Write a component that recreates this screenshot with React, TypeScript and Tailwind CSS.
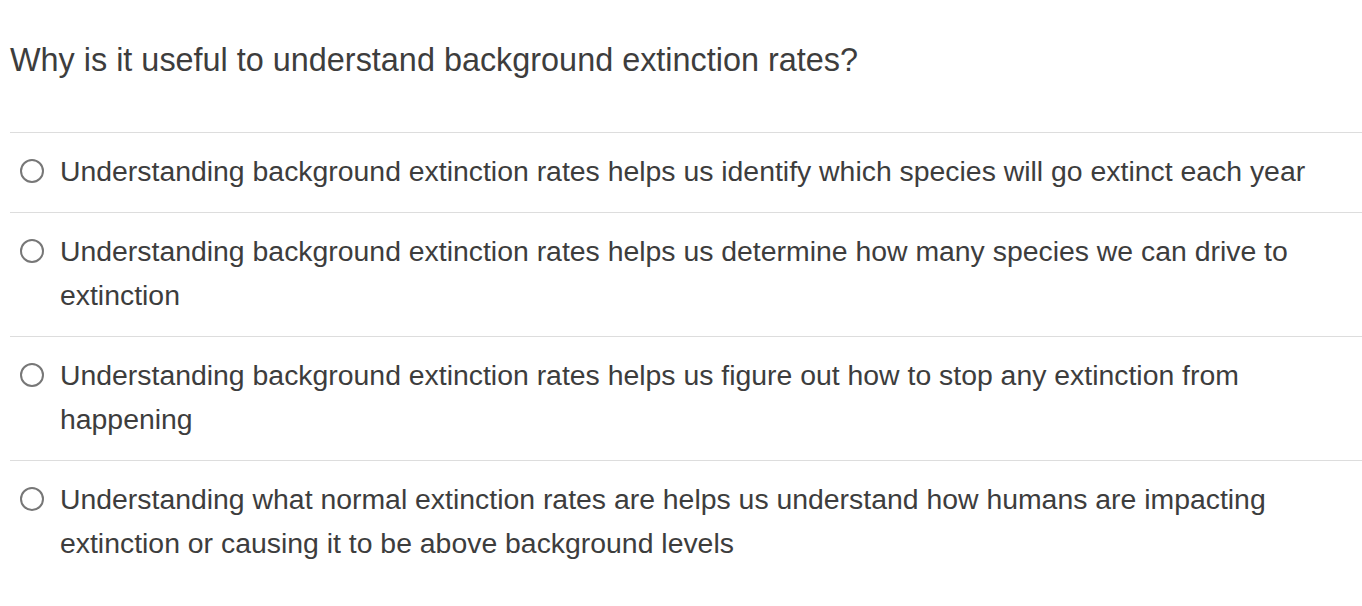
const question = "Why is it useful to understand background extinction rates?";

const options = [
  "Understanding background extinction rates helps us identify which species will go extinct each year",
  "Understanding background extinction rates helps us determine how many species we can drive to extinction",
  "Understanding background extinction rates helps us figure out how to stop any extinction from happening",
  "Understanding what normal extinction rates are helps us understand how humans are impacting extinction or causing it to be above background levels",
];

export default function App() {
  return (
    <div className="w-[1362px] h-[606px] bg-white text-[#3d3d3d] font-['Liberation_Sans',Arial,sans-serif] pl-[10px] overflow-hidden">
      <h1 className="pt-[39px] pb-[51px] text-[32.4px] leading-[42px] font-normal">{question}</h1>

      <div className="flex flex-col">
        {options.map((opt, i) => (
          <label key={i} className="flex items-start gap-[16px] border-t border-[#dddddd] pt-[16px] pb-[19px] pl-[10px] pr-[10px]">
            <span className="mt-[10px] w-[24px] h-[24px] shrink-0 rounded-full border-2 border-[#777777] bg-white" />
            <span className="text-[28.4px] leading-[44px]">{opt}</span>
          </label>
        ))}
      </div>
    </div>
  );
}
